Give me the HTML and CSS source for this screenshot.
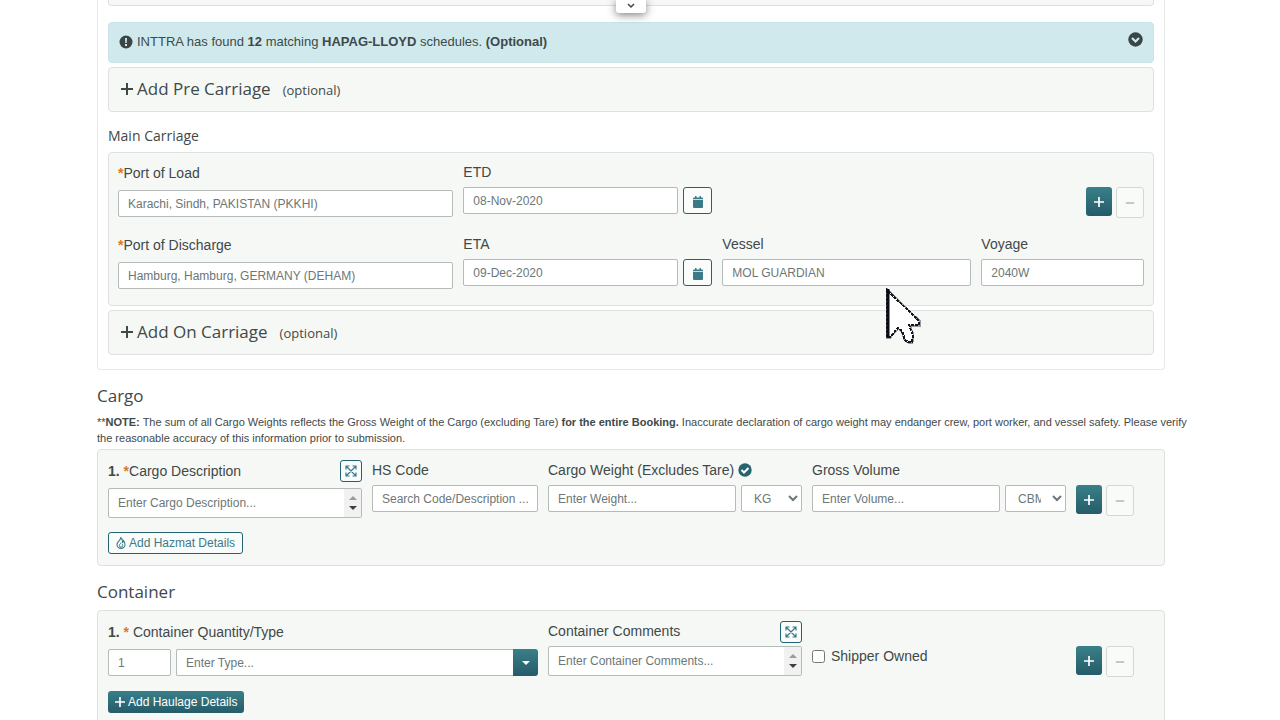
FILE: index.html
```html
<!DOCTYPE html>
<html lang="en">
<head>
    <meta charset="UTF-8">
    <meta name="viewport" content="width=device-width, initial-scale=1.0">
    <title>Booking Request</title>
    <link rel="stylesheet" href="styles.css">
</head>
<body>
    <!-- shared icons -->
    <svg class="icon-defs" aria-hidden="true">
        <symbol id="icon-plus" viewBox="0 0 12 12"><path d="M6 0v12M0 6h12" stroke="currentColor" stroke-width="2" fill="none"/></symbol>
        <symbol id="icon-minus" viewBox="0 0 12 12"><path d="M1 6h10" stroke="currentColor" stroke-width="2" fill="none"/></symbol>
        <symbol id="icon-calendar" viewBox="0 0 10 12">
            <path d="M2 0h1.500v1.500h3V0H8v1.500h1a1 1 0 0 1 1 1V3.300H0V2.500a1 1 0 0 1 1-1h1zM0 4h10v7a1 1 0 0 1-1 1H1a1 1 0 0 1-1-1z" fill="currentColor"/>
        </symbol>
        <symbol id="icon-expand" viewBox="0 0 12 12">
            <path d="M1 4.500V1h3.500M7.500 1H11v3.500M11 7.500V11H7.500M4.500 11H1V7.500M1 1l10 10M11 1L1 11" stroke="currentColor" stroke-width="1.200" fill="none"/>
        </symbol>
        <symbol id="icon-fire" viewBox="0 0 10 12">
            <path d="M4.800.7C5 3 1 4.300 1 7.600a4 3.800 0 0 0 8 0C9 5.700 8.200 4.500 7.500 3.700c-.1 1-.4 1.500-1 1.800C6.700 3.500 6 1.600 4.800.7z" stroke="currentColor" stroke-width="1.100" fill="none"/>
            <path d="M5 5.600C4.800 6.800 3.300 7.200 3.300 8.600a1.700 1.500 0 0 0 3.400 0C6.700 7.700 6.300 7.200 5.900 6.900" stroke="currentColor" stroke-width="1" fill="none"/>
        </symbol>
    </svg>

    <button type="button" class="pull-tab" aria-label="Show header">
        <svg width="8" height="6" viewBox="0 0 8 6"><path d="M1 1l3 3 3-3" stroke="#444" stroke-width="1.500" fill="none"/></svg>
    </button>

    <main class="page">
        <section class="routing">
            <div class="panel panel-cut"></div>

            <div class="alert">
                <svg width="14" height="14" viewBox="0 0 14 14">
                    <circle cx="7" cy="7" r="6.500" fill="#3a4545"/>
                    <path d="M6 3h2l-.3 5H6.300zM6 9h2v2H6z" fill="#cfe9ed"/>
                </svg>
                <p>INTTRA has found <strong>12</strong> matching <strong>HAPAG-LLOYD</strong> schedules. <strong>(Optional)</strong></p>
                <button type="button" class="alert-toggle" aria-label="Show schedules">
                    <svg width="15" height="15" viewBox="0 0 15 15">
                        <circle cx="7.500" cy="7.500" r="7.200" fill="#3a4545"/>
                        <path d="M4 6l3.500 3.500L11 6" stroke="#cfe9ed" stroke-width="2.200" fill="none"/>
                    </svg>
                </button>
            </div>

            <div class="panel add-carriage">
                <button type="button"><svg width="12" height="12"><use href="#icon-plus"/></svg><span>Add Pre Carriage</span><small>(optional)</small></button>
            </div>

            <h3>Main Carriage</h3>
            <div class="panel">
                <div class="row">
                    <div class="col-4">
                        <label for="pol" class="required"><i>*</i>Port of Load</label>
                        <input type="text" id="pol" value="Karachi, Sindh, PAKISTAN (PKKHI)">
                    </div>
                    <div class="col-3">
                        <label for="etd">ETD</label>
                        <div class="group">
                            <input type="text" id="etd" value="08-Nov-2020">
                            <button type="button" class="btn-outline btn-date" aria-label="Pick ETD"><svg width="10" height="12"><use href="#icon-calendar"/></svg></button>
                        </div>
                    </div>
                    <div class="col-5 row-actions actions-end">
                        <button type="button" class="btn btn-add" aria-label="Add leg"><svg width="10" height="10"><use href="#icon-plus"/></svg></button>
                        <button type="button" class="btn-remove" aria-label="Remove leg" disabled><svg width="10" height="10"><use href="#icon-minus"/></svg></button>
                    </div>
                </div>
                <div class="row">
                    <div class="col-4">
                        <label for="pod" class="required"><i>*</i>Port of Discharge</label>
                        <input type="text" id="pod" value="Hamburg, Hamburg, GERMANY (DEHAM)">
                    </div>
                    <div class="col-3">
                        <label for="eta">ETA</label>
                        <div class="group">
                            <input type="text" id="eta" value="09-Dec-2020">
                            <button type="button" class="btn-outline btn-date" aria-label="Pick ETA"><svg width="10" height="12"><use href="#icon-calendar"/></svg></button>
                        </div>
                    </div>
                    <div class="col-3">
                        <label for="vessel">Vessel</label>
                        <input type="text" id="vessel" value="MOL GUARDIAN">
                    </div>
                    <div class="col-2">
                        <label for="voyage">Voyage</label>
                        <input type="text" id="voyage" value="2040W">
                    </div>
                </div>
            </div>

            <div class="panel add-carriage">
                <button type="button"><svg width="12" height="12"><use href="#icon-plus"/></svg><span>Add On Carriage</span><small>(optional)</small></button>
            </div>
        </section>

        <section>
            <h2>Cargo</h2>
            <p class="note">**<strong>NOTE:</strong> The sum of all Cargo Weights reflects the Gross Weight of the Cargo (excluding Tare) <strong>for the entire Booking.</strong> Inaccurate declaration of cargo weight may endanger crew, port worker, and vessel safety. Please verify the reasonable accuracy of this information prior to submission.</p>
            <div class="panel">
                <div class="row">
                    <div class="col-3">
                        <div class="label-line">
                            <label for="cargo" class="required"><b>1.</b> <i>*</i>Cargo Description</label>
                            <button type="button" class="btn-outline btn-expand" aria-label="Expand description"><svg width="12" height="12"><use href="#icon-expand"/></svg></button>
                        </div>
                        <div class="text-box">
                            <textarea id="cargo" rows="1" placeholder="Enter Cargo Description..."></textarea>
                            <span class="scroll"></span>
                        </div>
                    </div>
                    <div class="col-2">
                        <label for="hs">HS Code</label>
                        <input type="text" id="hs" placeholder="Search Code/Description ...">
                    </div>
                    <div class="col-3">
                        <label for="weight">Cargo Weight (Excludes Tare)
                            <svg width="14" height="14" viewBox="0 0 14 14"><circle cx="7" cy="7" r="6.700" fill="#256371"/><path d="M3.500 7l2.500 2.500 4.500-4.500" stroke="#fff" stroke-width="2" fill="none"/></svg>
                        </label>
                        <div class="group">
                            <input type="text" id="weight" placeholder="Enter Weight...">
                            <select aria-label="Weight unit"><option>KG</option><option>LB</option></select>
                        </div>
                    </div>
                    <div class="col-3">
                        <label for="volume">Gross Volume</label>
                        <div class="group">
                            <input type="text" id="volume" placeholder="Enter Volume...">
                            <select aria-label="Volume unit"><option>CBM</option><option>CFT</option></select>
                        </div>
                    </div>
                    <div class="col-1 row-actions">
                        <button type="button" class="btn btn-add" aria-label="Add cargo"><svg width="10" height="10"><use href="#icon-plus"/></svg></button>
                        <button type="button" class="btn-remove" aria-label="Remove cargo" disabled><svg width="10" height="10"><use href="#icon-minus"/></svg></button>
                    </div>
                </div>
                <button type="button" class="btn-outline btn-text"><svg width="10" height="12"><use href="#icon-fire"/></svg>Add Hazmat Details</button>
            </div>
        </section>

        <section>
            <h2>Container</h2>
            <div class="panel">
                <div class="row">
                    <div class="col-5">
                        <label for="type" class="required"><b>1.</b> <i>*</i> Container Quantity/Type</label>
                        <div class="group">
                            <input type="text" class="qty" value="1" aria-label="Container quantity">
                            <div class="combo">
                                <input type="text" id="type" placeholder="Enter Type...">
                                <button type="button" class="btn" aria-label="Show types"><span class="caret"></span></button>
                            </div>
                        </div>
                    </div>
                    <div class="col-3">
                        <div class="label-line">
                            <label for="comments">Container Comments</label>
                            <button type="button" class="btn-outline btn-expand" aria-label="Expand comments"><svg width="12" height="12"><use href="#icon-expand"/></svg></button>
                        </div>
                        <div class="text-box">
                            <textarea id="comments" rows="1" placeholder="Enter Container Comments..."></textarea>
                            <span class="scroll"></span>
                        </div>
                    </div>
                    <div class="col-3 check">
                        <input type="checkbox" id="soc">
                        <label for="soc">Shipper Owned</label>
                    </div>
                    <div class="col-1 row-actions">
                        <button type="button" class="btn btn-add" aria-label="Add container"><svg width="10" height="10"><use href="#icon-plus"/></svg></button>
                        <button type="button" class="btn-remove" aria-label="Remove container" disabled><svg width="10" height="10"><use href="#icon-minus"/></svg></button>
                    </div>
                </div>
                <button type="button" class="btn btn-text"><svg width="10" height="10"><use href="#icon-plus"/></svg>Add Haulage Details</button>
            </div>
        </section>
    </main>

    <svg class="pointer" width="38" height="56" viewBox="0 0 38 56" aria-hidden="true">
        <path d="M2 2V49H5L13 40L17 43L20 52L23 54H27L28 47L24 37H34V33Z" fill="#fff" stroke="#9a9aa4" stroke-width="3" shape-rendering="crispEdges"/>
        <path d="M2 2V49H5L13 40L17 43L20 52L23 54H27L28 47L24 37H34V33Z" fill="#fff" stroke="#16161e" stroke-width="2" stroke-dasharray="3 1" shape-rendering="crispEdges"/>
        <path d="M3 1V50" stroke="#0c0c12" stroke-width="3" fill="none"/>
    </svg>
</body>
</html>
```

FILE: styles.css
```css
* {
    box-sizing: border-box;
}
body {
    margin: 0;
    height: 100vh;
    overflow: hidden;
    position: relative;
    background: #fff;
    color: #3f4948;
    font-family: "Liberation Sans", Arial, sans-serif;
    font-size: 14px;
}
button,
input,
select,
textarea {
    font-family: inherit;
    margin: 0;
}
button {
    cursor: pointer;
}
.icon-defs {
    display: none;
}
.page {
    padding: 0 115px 0 97px;
}
h2,
h3,
.add-carriage {
    font-family: "Open Sans", sans-serif;
    font-weight: 400;
}
h2 {
    margin: 0 0 4px;
    padding-top: 12px;
    font-size: 17px;
    line-height: 28px;
}
h3 {
    margin: 12px 0 4px;
    font-size: 14px;
    line-height: 24px;
}

/* panels */
.routing {
    border: 1px solid #e6e9e8;
    border-top: none;
    border-radius: 0 0 4px 4px;
    padding: 0 10px 14px;
}
.panel {
    border: 1px solid #dde2e1;
    border-radius: 4px;
    background: #f6f8f6;
    padding: 8px 10px 11px;
}
.routing .panel {
    padding: 7px 9px 2px;
}
.routing .panel-cut {
    height: 6px;
    padding: 0;
    border-top: none;
    border-radius: 0 0 4px 4px;
}
.alert {
    display: flex;
    align-items: center;
    margin: 16px 0 4px;
    padding: 0 10px 2px;
    height: 41px;
    border: 1px solid #c9e3e7;
    border-radius: 4px;
    background: #cfe9ed;
    font-size: 13px;
}
.alert p {
    flex: 1;
    margin: 0 0 0 4px;
}
.alert-toggle {
    display: flex;
    align-self: flex-start;
    margin-top: 9px;
    padding: 0;
    border: none;
    background: none;
}
.routing .add-carriage {
    padding: 0 12px;
    margin-top: 4px;
}
.add-carriage button {
    display: flex;
    align-items: baseline;
    padding: 0;
    border: none;
    background: none;
    color: inherit;
    font-family: inherit;
    font-size: 17px;
    line-height: 41px;
}
.add-carriage svg {
    margin-bottom: 2px;
}
.add-carriage span {
    margin: 0 12px 0 4px;
}
.add-carriage small {
    font-size: 13px;
}
.note {
    margin: 0 -28px 3px 0;
    font-size: 11px;
    line-height: 16px;
}

/* form grid */
.row {
    display: grid;
    grid-template-columns: repeat(12, 1fr);
    column-gap: 10px;
    align-items: start;
    margin-bottom: 14px;
}
.col-1 { grid-column: span 1; }
.col-2 { grid-column: span 2; }
.col-3 { grid-column: span 3; }
.col-4 { grid-column: span 4; }
.col-5 { grid-column: span 5; }
label {
    display: block;
    margin-bottom: 3px;
    line-height: 24px;
    white-space: nowrap;
}
label svg {
    vertical-align: -2px;
}
label.required {
    line-height: 27px;
}
label i {
    color: #d9772b;
    font-style: normal;
    font-weight: bold;
}
.label-line {
    display: flex;
    justify-content: space-between;
    align-items: flex-start;
}
input[type="text"],
select,
.text-box {
    width: 100%;
    min-width: 0;
    height: 27px;
    border: 1px solid #b4bbb9;
    border-radius: 2px;
    background: #fff;
    color: #6c7776;
    font-size: 12px;
}
input[type="text"] {
    padding: 0 9px;
}
::placeholder {
    color: #6c7776;
    opacity: 1;
}
.group {
    display: flex;
    gap: 5px;
}
.group select {
    flex: 0 0 61px;
    padding: 0 8px;
}
.group .qty {
    flex: 0 0 63px;
}
.combo {
    display: flex;
    flex: 1;
}
.combo input[type="text"] {
    border-right: none;
    border-radius: 2px 0 0 2px;
}
.combo .btn {
    flex: 0 0 25px;
    border-radius: 0 3px 3px 0;
}
.caret {
    border: 4px solid transparent;
    border-top-color: #fff;
    border-bottom: none;
}
.text-box {
    display: flex;
    height: 30px;
}
.text-box textarea {
    flex: 1;
    min-width: 0;
    padding: 0 9px;
    border: none;
    background: none;
    resize: none;
    overflow: hidden;
    font-size: 12px;
    line-height: 28px;
}
.scroll {
    display: flex;
    flex-direction: column;
    align-items: center;
    justify-content: space-evenly;
    width: 17px;
    background: #f1f1f1;
}
.scroll::before,
.scroll::after {
    content: "";
    border: 4px solid transparent;
}
.scroll::before {
    border-top: none;
    border-bottom-color: #9a9a9a;
}
.scroll::after {
    border-bottom: none;
    border-top-color: #404040;
}
.check {
    display: flex;
    align-items: center;
    gap: 6px;
    padding-top: 25px;
}
.check input {
    width: 13px;
    height: 13px;
}
.check label {
    margin: 0;
}

/* buttons */
.btn,
.btn-outline,
.btn-remove {
    display: flex;
    align-items: center;
    justify-content: center;
    padding: 0;
    border: none;
    border-radius: 3px;
}
.btn {
    background: linear-gradient(#398089, #265b69);
    color: #fff;
}
.btn-outline {
    border: 1px solid #236270;
    background: #f9fcfb;
    color: #3b7a86;
}
.btn-date {
    flex: 0 0 29px;
    padding-top: 3px;
}
.btn-expand {
    width: 22px;
    height: 22px;
    margin-top: 2px;
}
.btn-text {
    height: 22px;
    padding: 0 7px;
    gap: 3px;
    font-size: 12px;
}
.row-actions {
    display: flex;
    gap: 4px;
    padding-top: 27px;
}
.actions-end {
    justify-content: flex-end;
}
.btn-add {
    width: 26px;
    height: 29px;
}
.btn-remove {
    width: 28px;
    height: 31px;
    border: 1px solid #d3d7d5;
    background: #f9fbf9;
    color: #b9bebd;
}

/* over the page */
.pull-tab {
    position: absolute;
    top: 0;
    left: 50%;
    width: 30px;
    height: 13px;
    margin-left: -24px;
    padding: 0 0 3px;
    border: none;
    border-radius: 0 0 3px 3px;
    background: #fff;
    box-shadow: 0 2px 8px rgba(0, 0, 0, 0.5);
    line-height: 8px;
}
.pointer {
    position: absolute;
    left: 885px;
    top: 288px;
}
```
